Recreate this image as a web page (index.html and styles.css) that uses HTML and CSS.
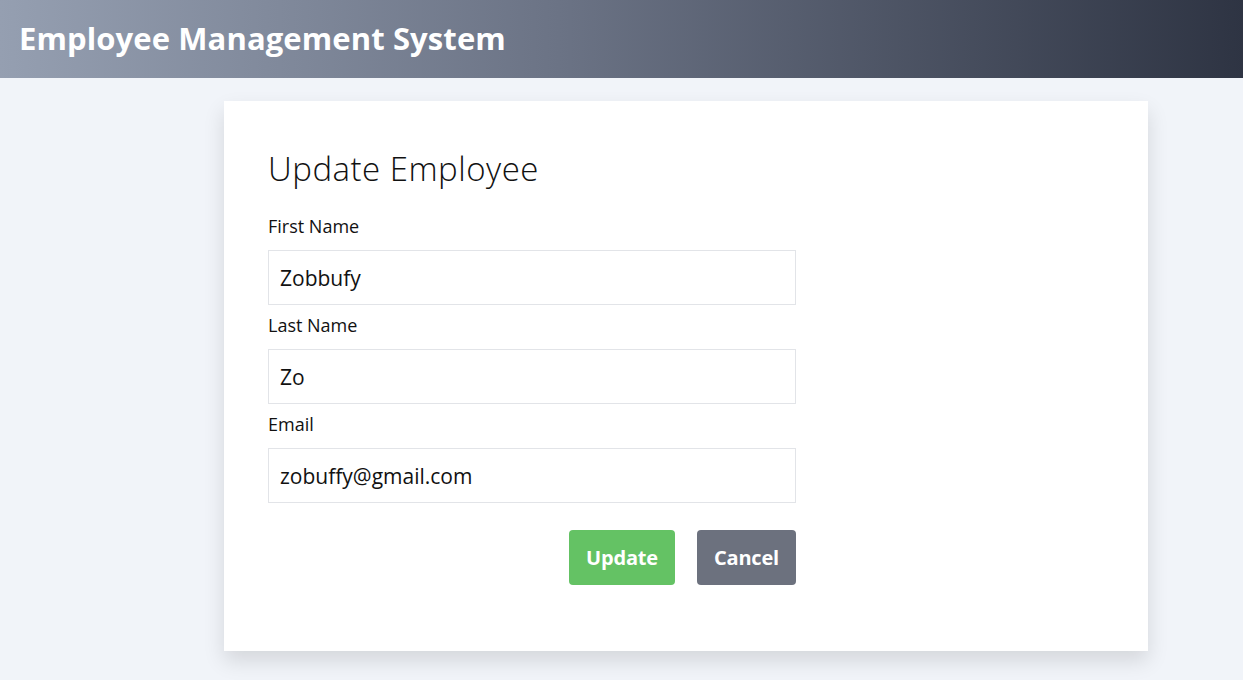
FILE: index.html
```html
<!DOCTYPE html>
<html lang="en">
<head>
<meta charset="utf-8">
<title>Employee Management System</title>
<link rel="stylesheet" href="styles.css">
</head>
<body>
<header class="topbar">
  <h1 class="brand">Employee Management System</h1>
</header>
<main class="page">
  <section class="card">
    <h2 class="card-title">Update Employee</h2>
    <form class="form">
      <div class="field">
        <label class="label">First Name</label>
        <input class="input" type="text" value="Zobbufy">
      </div>
      <div class="field">
        <label class="label">Last Name</label>
        <input class="input" type="text" value="Zo">
      </div>
      <div class="field">
        <label class="label">Email</label>
        <input class="input" type="text" value="zobuffy@gmail.com">
      </div>
      <div class="actions">
        <button type="button" class="btn btn-update">Update</button>
        <button type="button" class="btn btn-cancel">Cancel</button>
      </div>
    </form>
  </section>
</main>
</body>
</html>
```
FILE: styles.css
```css
* { box-sizing: border-box; }
html, body { margin: 0; padding: 0; }
body {
  background: #f1f4f9;
  font-family: "Open Sans", "Noto Sans", sans-serif;
  color: #1a1a1a;
  height: 680px;
  overflow: hidden;
}
.topbar {
  height: 78px;
  background: linear-gradient(90deg, #959fb1 0%, #6b7385 45%, #2e3443 100%);
  display: flex;
  align-items: center;
  padding: 0 19px;
}
.brand {
  margin: 0;
  color: #fff;
  font-size: 31px;
  font-weight: 700;
  letter-spacing: 0.1px;
  line-height: 40px;
  margin-top: -2px;
}
.page {
  display: flex;
  padding: 23px 0 0 224px;
}
.card {
  width: 924px;
  height: 550px;
  background: #fff;
  box-shadow: 0 10px 20px rgba(0, 0, 0, 0.12);
  padding: 46px 44px;
}
.card-title {
  margin: 0 0 23px;
  font-size: 33px;
  font-weight: 300;
  color: #111;
  letter-spacing: 0.5px;
  line-height: 44px;
}
.form { width: 528px; display: flex; flex-direction: column; }
.field { display: flex; flex-direction: column; }
.label {
  font-size: 18px;
  color: #111;
  line-height: 24px;
  margin-bottom: 12px;
}
.input {
  height: 55px;
  border: 1px solid #e2e4e8;
  padding: 0 11px;
  font-family: inherit;
  font-size: 21px;
  color: #111;
  outline: none;
  margin-bottom: 8px;
}
.actions {
  display: flex;
  justify-content: flex-end;
  gap: 22px;
  margin-top: 19px;
}
.btn {
  height: 55px;
  border: none;
  border-radius: 4px;
  color: #fff;
  font-family: inherit;
  font-size: 20px;
  font-weight: 700;
  padding: 0 16px;
  letter-spacing: -0.2px;
}
.btn-update { background: #64c264; width: 106px; }
.btn-cancel { background: #6c717e; width: 99px; }
```
